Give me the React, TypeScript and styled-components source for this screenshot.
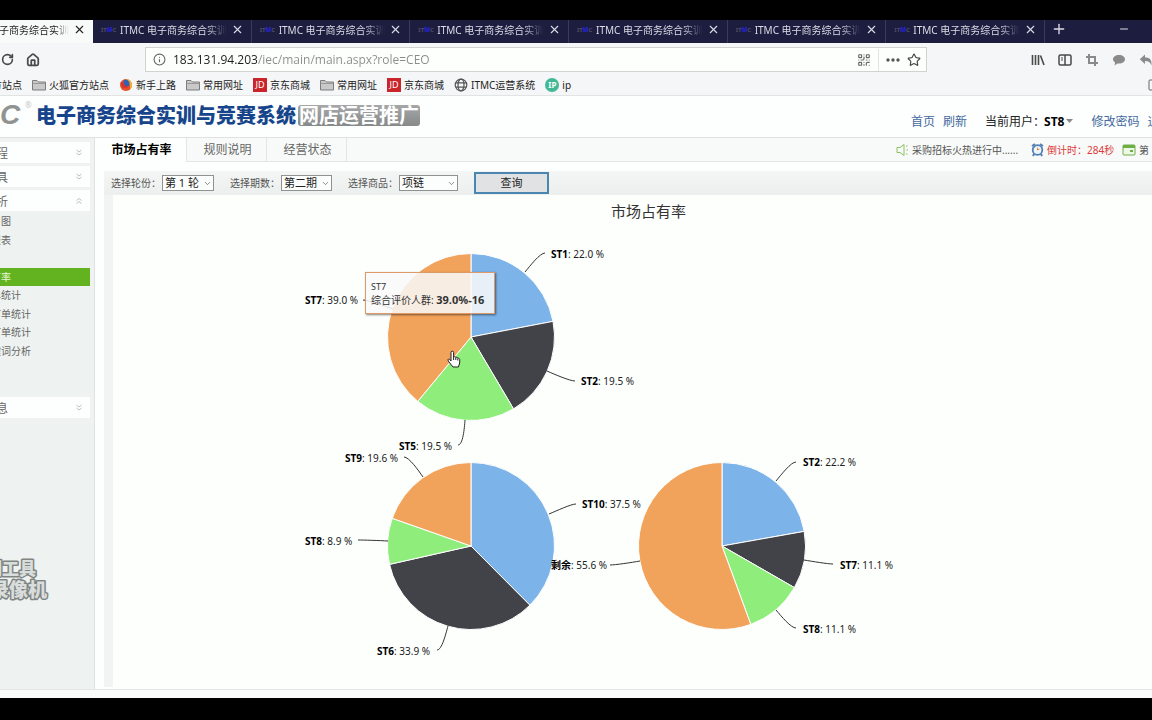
import React from 'react';
import styled, { createGlobalStyle, css } from 'styled-components';
import { X, Plus, Minus, House, RotateCw, Info, QrCode, Star, ChevronDown } from 'lucide-react';

const GlobalStyle = createGlobalStyle`
  *, *::before, *::after { box-sizing: border-box; }
  body {
    margin: 0;
    background: #000;
    font-family: "Noto Sans", "Noto Sans CJK SC", sans-serif;
    font-size: 10px;
    color: #333;
  }
  button, input, select { font: inherit; color: inherit; margin: 0; }
  button { padding: 0; border: 0; background: none; }
  svg { display: block; flex: none; }
  a { text-decoration: none; color: inherit; }
`;

const Screen = styled.div`
  position: relative;
  display: flex;
  flex-direction: column;
  min-height: 100vh;
  padding: 20px 0 22px;
  background: #000;
  overflow: hidden;
`;

/* ---------- browser chrome ---------- */

const TabStrip = styled.div`
  display: flex;
  height: 23px;
  background: #1d1d40;
  color: #dcdce6;
`;

const TabGroup = styled.div`
  flex: 0 1 952px;
  display: grid;
  grid-template-columns: repeat(6, 1fr);
`;

const BrowserTab = styled.div<{ $active?: boolean }>`
  display: flex;
  align-items: center;
  gap: 4px;
  height: 23px;
  padding: 0 7px 4px 8px;
  border-right: 1px solid #3a3a5a;
  overflow: hidden;
  white-space: nowrap;
  ${p =>
    p.$active &&
    css`
      flex: 0 0 93px;
      padding-left: 0;
      background: #f8f9f9;
      color: #222;
      border: 0;
    `}
`;

const TabTitle = styled.span<{ $end?: boolean }>`
  flex: 1;
  min-width: 0;
  display: flex;
  justify-content: ${p => (p.$end ? 'flex-end' : 'flex-start')};
  overflow: hidden;
  line-height: 18px;
  mask-image: linear-gradient(to right, #000 80%, transparent 100%);
`;

const Favicon = styled.span`
  width: 15px;
  font-size: 6px;
  font-weight: 700;
  line-height: 18px;
  color: #4d4d63;
  b { color: #2323c8; }
`;

const StripButton = styled.button`
  display: flex;
  align-items: center;
  justify-content: center;
  height: 18px;
`;

const NewTab = styled(StripButton)`
  width: 28px;
`;

const Minimize = styled(StripButton)`
  width: 20px;
  margin-left: auto;
  margin-right: 18px;
`;

const NavBar = styled.div`
  display: flex;
  align-items: center;
  height: 33px;
  background: #f5f6f7;
  color: #4a4a4a;
`;

const NavLeft = styled.div`
  flex: 0 0 145px;
  display: flex;
  align-items: center;
  gap: 12px;
`;

const IconButton = styled.button`
  display: flex;
  align-items: center;
  justify-content: center;
  width: 14px;
  height: 16px;
`;

const AddressBar = styled.div`
  flex: 1;
  display: flex;
  align-items: center;
  height: 25px;
  padding: 0 5px 0 7px;
  gap: 7px;
  border: 1px solid #d2d2d2;
  background: #fdfffd;
  color: #666;
`;

const AddressInput = styled.input`
  flex: 1;
  min-width: 0;
  height: 22px;
  padding: 0;
  border: 0;
  outline: 0;
  font-family: "Open Sans", sans-serif;
  font-size: 12px;
  background: linear-gradient(to right, #1c1c1c 84px, #8b8b8b 84px);
  background-clip: text;
  -webkit-background-clip: text;
  -webkit-text-fill-color: transparent;
`;

const AddressDivider = styled.i`
  width: 1px;
  height: 22px;
  background: #e2e2e2;
`;

const NavRight = styled.div`
  flex: 0 0 225px;
  display: flex;
  align-items: center;
  gap: 13px;
  padding-left: 104px;
  overflow: hidden;
`;

const BookmarkBar = styled.div`
  display: flex;
  align-items: center;
  gap: 10px;
  height: 20px;
  padding-bottom: 2px;
  background: #f5f6f7;
  border-bottom: 1px solid #e2e3e3;
  color: #222;
`;

const Bookmark = styled.a`
  display: flex;
  align-items: center;
  gap: 3px;
  white-space: nowrap;
  line-height: 16px;
`;

const ClippedBookmark = styled(Bookmark)`
  width: 22px;
  justify-content: flex-end;
  overflow: hidden;
`;

const PhoneLink = styled(IconButton)`
  width: 4px;
  margin-left: auto;
  overflow: hidden;
  justify-content: flex-start;
`;

/* ---------- page header ---------- */

const Header = styled.header`
  display: flex;
  align-items: flex-start;
  height: 42px;
  background: #fcfffd;
  border-bottom: 1px solid #dfe2e0;
`;

const Brand = styled.div`
  display: flex;
  align-items: center;
  height: 38px;
`;

const BrandMark = styled.span`
  width: 23px;
  font: italic 700 28px/38px "Liberation Sans", sans-serif;
  color: #909392;
`;

const Registered = styled.sup`
  width: 13px;
  align-self: flex-start;
  padding-left: 2px;
  font-size: 8px;
  line-height: 18px;
  color: #c6c8c7;
`;

const BrandTitle = styled.h1`
  margin: 0;
  font-family: "Noto Sans CJK SC", sans-serif;
  font-size: 20px;
  font-weight: 900;
  line-height: 38px;
  color: #17458c;
  white-space: nowrap;
`;

const BrandBadge = styled.span`
  height: 21px;
  margin-left: 2px;
  padding: 0 1px;
  border-radius: 3px;
  background: linear-gradient(#a6a8a8, #85898a);
  font-family: "Noto Sans CJK SC", sans-serif;
  font-size: 20px;
  font-weight: 700;
  line-height: 20px;
  color: #fff;
  white-space: nowrap;
`;

const UserNav = styled.nav`
  display: flex;
  align-items: center;
  width: 241px;
  height: 50px;
  margin-left: auto;
  overflow: hidden;
  white-space: nowrap;
  font-size: 12px;
  color: #222;
  a { color: #45699f; margin-right: 8px; }
`;

const UserMenu = styled.button`
  display: flex;
  align-items: center;
  gap: 2px;
  margin-right: 18px;
  font-weight: 700;
  color: #000;
`;

const UserLabel = styled.span`
  width: 59px;
  margin-left: 10px;
`;

/* ---------- body ---------- */

const Body = styled.div`
  flex: 1;
  display: flex;
  background: #fcfffd;
  border-bottom: 1px solid #e2e5e3;
`;

const Sidebar = styled.aside`
  flex: 0 0 95px;
  padding: 4px 4px 0 0;
  background: #eef2f0;
  border-right: 1px solid #dfe3e1;
`;

const GroupHeading = styled.button`
  display: flex;
  align-items: center;
  justify-content: space-between;
  width: 100%;
  height: 21px;
  margin-bottom: 3px;
  padding-right: 7px;
  background: #fdfffe;
  font-size: 12px;
  color: #666;
`;

const Clip = styled.span<{ $end: number }>`
  display: flex;
  justify-content: flex-end;
  width: ${p => p.$end}px;
  overflow: hidden;
  white-space: nowrap;
`;

const MenuList = styled.ul`
  display: grid;
  grid-auto-rows: 1fr;
  height: 185px;
  margin: -2px 0 0;
  padding: 0;
  list-style: none;
  color: #666;
`;

const MenuItem = styled.a<{ $selected?: boolean }>`
  display: flex;
  align-items: center;
  height: 100%;
  line-height: 18px;
  ${p => p.$selected && css`background: #62b31f; color: #e3f6d2;`}
`;

const Main = styled.main`
  flex: 1;
  min-width: 0;
  display: flex;
  flex-direction: column;
`;

const PageTabs = styled.div`
  display: flex;
  height: 24px;
  background: #f7faf8;
  border-bottom: 1px solid #e3e6e4;
`;

const PageTab = styled.button<{ $active?: boolean }>`
  width: ${p => (p.$active ? 92 : 80)}px;
  height: 24px;
  padding-left: 2px;
  border-right: 1px solid #e3e6e4;
  font-size: 12px;
  line-height: 22px;
  white-space: nowrap;
  color: #666;
  ${p => p.$active && css`background: #fcfffd; font-weight: 700; color: #000;`}
`;

const Status = styled.div`
  display: flex;
  align-items: center;
  width: 256px;
  margin-left: auto;
  gap: 3px;
  overflow: hidden;
  white-space: nowrap;
  color: #555;
`;

const Notice = styled.span`
  width: 116px;
`;

const Countdown = styled.span`
  width: 72px;
  color: #dd3a38;
`;

const Panel = styled.section`
  flex: 1;
  display: flex;
  flex-direction: column;
  margin: 9px 0 2px 9px;
  padding-left: 9px;
  background: #f2f4f3;
`;

const FilterBar = styled.form`
  display: flex;
  align-items: center;
  height: 24px;
  margin-left: -9px;
  padding-left: 7px;
  background: linear-gradient(#f4f6f5, #ebefed);
  color: #555;
`;

const FilterLabel = styled.label`
  width: 51px;
  line-height: 20px;
  white-space: nowrap;
`;

const SelectBox = styled.span<{ $w: number }>`
  position: relative;
  width: ${p => p.$w}px;
  margin-right: 16px;
  svg { position: absolute; right: 2px; top: 4px; pointer-events: none; }
`;

const Select = styled.select`
  display: block;
  appearance: none;
  width: 100%;
  height: 16px;
  padding: 0 0 0 2px;
  border: 1px solid #8f9291;
  border-radius: 0;
  background: #fcfefd;
  font-size: 11px;
  line-height: 14px;
  color: #222;
`;

const QueryButton = styled.button`
  width: 75px;
  height: 22px;
  border: 2px solid #4a86b0;
  background: #e0e2e3;
  font-size: 11px;
  line-height: 16px;
  color: #222;
`;

const ChartArea = styled.div`
  position: relative;
  flex: 1;
  overflow: hidden;
  background: #fdfffd;
`;

const ChartTitle = styled.h2`
  width: 1071px;
  margin: 0;
  padding-top: 5px;
  text-align: center;
  font-size: 15px;
  font-weight: 400;
  line-height: 22px;
  color: #333;
`;

const ChartSvg = styled.svg`
  margin-top: -27px;
  overflow: visible;
  font-size: 10px;
  fill: #222;
`;

const Tooltip = styled.div`
  position: absolute;
  left: 252px;
  top: 77px;
  width: 130px;
  height: 42px;
  padding: 7px 5px;
  border: 1px solid #dd9a68;
  background: rgba(249, 249, 249, 0.86);
  box-shadow: 1px 1px 2px rgba(0, 0, 0, 0.5);
  line-height: 13px;
  white-space: nowrap;
  color: #333;
  small { display: block; font-size: 9px; }
  b { font-size: 11px; }
`;

const Pointer = styled.svg`
  position: absolute;
  left: 334px;
  top: 155px;
`;

const FooterStrip = styled.footer`
  height: 8px;
  background: #fafcfb;
`;

const Watermark = styled.svg`
  position: absolute;
  left: 0;
  top: 556px;
  font-family: "Noto Sans CJK SC", sans-serif;
  font-weight: 900;
  fill: #d9dddb;
  stroke: #808583;
  stroke-width: 3px;
  stroke-linejoin: round;
  paint-order: stroke;
`;

/* ---------- icons ---------- */

const FolderIcon = () => (
  <svg width="14" height="14" viewBox="0 0 14 14" fill="#c9c9c9" stroke="#7c7c7c">
    <path d="M.5 2.5h4.5l1.500 1.500h7v8H.5z" />
    <path d="M.5 5.500h13" stroke="#999" />
  </svg>
);

const FirefoxIcon = () => (
  <svg width="14" height="14" viewBox="0 0 14 14">
    <circle cx="7" cy="7" r="6" fill="#e8502a" />
    <path d="M7 1a6 6 0 0 1 6 6c0 2-1 3.500-2 4.500C12 8 10 4 7 1z" fill="#f7b52c" />
    <path d="M5 2c3-1 6 1 5.500 4.500C10 9 7 9.500 5.500 8 4 6.500 4 4 5 2z" fill="#2f62b5" />
    <path d="M1.500 4C3 4 5 5 5.500 6.500S8 9 9.500 8.500C8 11 4 10.500 2.500 8.500z" fill="#d8332c" />
  </svg>
);

const Jd = styled.span`
  width: 14px;
  height: 14px;
  background: #c9252b;
  color: #fff;
  font-size: 9px;
  line-height: 14px;
  text-align: center;
`;

const IpMark = styled(Jd)`
  border-radius: 7px;
  background: #43b896;
  font-size: 8px;
  font-weight: 700;
`;

const GlobeIcon = () => (
  <svg width="14" height="14" viewBox="0 0 14 14" fill="none" stroke="#555" strokeWidth="1.2">
    <circle cx="7" cy="7" r="5.8" />
    <ellipse cx="7" cy="7" rx="3" ry="5.800" />
    <path d="M1.800 4.800h10.400M1.800 9.200h10.400" />
  </svg>
);

const LibraryIcon = () => (
  <svg width="14" height="14" viewBox="0 0 14 14" fill="none" stroke="#4a4a4a" strokeWidth="1.600">
    <path d="M1.500 2v10M4.500 2v10M7.500 2v10M9.500 2.500l3.500 9.500" />
  </svg>
);

const SidebarIcon = () => (
  <svg width="14" height="14" viewBox="0 0 14 14" fill="none" stroke="#4a4a4a" strokeWidth="1.500">
    <rect x="1" y="2" width="12" height="10" rx="1.500" />
    <path d="M7 2v10" />
    <path d="M3 5h2M3 7h2" strokeWidth="1" />
  </svg>
);

const CropIcon = () => (
  <svg width="14" height="14" viewBox="0 0 14 14" fill="none" stroke="#8a8a8a" strokeWidth="2">
    <path d="M4 1v9h9M1 4h9v9" />
  </svg>
);

const ChatIcon = () => (
  <svg width="14" height="14" viewBox="0 0 14 14" fill="#8a8a8a">
    <path d="M7 2c3.500 0 6 1.900 6 4.300s-2.500 4.300-6 4.300c-.6 0-1 0-1.500-.1L2.500 12.500l.6-3C1.800 8.700 1 7.500 1 6.300 1 3.900 3.500 2 7 2z" />
  </svg>
);

const UndoIcon = () => (
  <svg width="14" height="14" viewBox="0 0 14 14" fill="#8a8a8a">
    <path d="M6 1.500v3c5 0 7 2.500 6.500 8-1-3.200-3-4.500-6.500-4.500v3L.8 6.200z" />
  </svg>
);

const DoubleChevron = ({ up }: { up?: boolean }) => (
  <svg width="8" height="8" viewBox="0 0 8 8" fill="none" stroke="#bcc0be">
    <path d={up ? 'M1.500 3.500l2.500-2L6.500 3.500M1.500 6.500l2.500-2L6.500 6.500' : 'M1.500 1l2.500 2L6.500 1M1.500 4l2.500 2L6.500 4'} />
  </svg>
);

const SpeakerIcon = () => (
  <svg width="13" height="14" viewBox="0 0 13 14" fill="none" stroke="#8cc063">
    <path d="M1 4.500h3L8 1.500v11L4 9.500H1z" />
    <path d="M10 3.500l1.500-1M10.500 7H12M10 10.500l1.500 1" />
  </svg>
);

const AlarmIcon = () => (
  <svg width="13" height="14" viewBox="0 0 13 14">
    <path d="M1 3l3-2M12 3L9 1M3 11l-1 2M10 11l1 2" stroke="#5c7ea8" strokeWidth="2" />
    <circle cx="6.500" cy="7" r="4.800" fill="#eef4fa" stroke="#4f7fb8" strokeWidth="1.800" />
    <path d="M6.500 4.500V7l2-1" fill="none" stroke="#e08a2c" />
  </svg>
);

const CalendarIcon = () => (
  <svg width="14" height="14" viewBox="0 0 14 14">
    <rect x="1" y="2" width="12" height="10" rx="1" fill="#eef8e6" stroke="#6fae45" />
    <path d="M1 2h12v3H1z" fill="#6fae45" />
    <path d="M8 8h3" stroke="#6fae45" strokeWidth="2" />
  </svg>
);

/* ---------- chart data ---------- */

type Point = [number, number];
interface Slice {
  name: string;
  value: number;
  color: string;
  text: Point;
  from: Point;
  to: Point;
}
interface PieData {
  cx: number;
  cy: number;
  slices: Slice[];
}

const BLUE = '#7cb3e9';
const DARK = '#424348';
const GREEN = '#8fee7b';
const ORANGE = '#f2a35b';
const RADIUS = 83.5;

const pies: PieData[] = [
  {
    cx: 358,
    cy: 142,
    slices: [
      { name: 'ST1', value: 22.0, color: BLUE, text: [438, 63], from: [432, 58], to: [412, 77] },
      { name: 'ST2', value: 19.5, color: DARK, text: [468, 190], from: [462, 186], to: [434, 176] },
      { name: 'ST5', value: 19.5, color: GREEN, text: [286, 255], from: [345, 250], to: [352, 225] },
      { name: 'ST7', value: 39.0, color: ORANGE, text: [192, 109], from: [250, 105], to: [280, 114] },
    ],
  },
  {
    cx: 358,
    cy: 351,
    slices: [
      { name: 'ST10', value: 37.5, color: BLUE, text: [469, 313], from: [463, 309], to: [436, 319] },
      { name: 'ST6', value: 33.9, color: DARK, text: [264, 460], from: [324, 455], to: [335, 431] },
      { name: 'ST8', value: 8.9, color: GREEN, text: [192, 350], from: [245, 345], to: [275, 346] },
      { name: 'ST9', value: 19.6, color: ORANGE, text: [232, 267], from: [291, 262], to: [310, 282] },
    ],
  },
  {
    cx: 609,
    cy: 351,
    slices: [
      { name: 'ST2', value: 22.2, color: BLUE, text: [690, 271], from: [683, 267], to: [663, 286] },
      { name: 'ST7', value: 11.1, color: DARK, text: [727, 374], from: [720, 369], to: [691, 365] },
      { name: 'ST8', value: 11.1, color: GREEN, text: [690, 438], from: [683, 433], to: [663, 415] },
      { name: '剩余', value: 55.6, color: ORANGE, text: [438, 374], from: [497, 370], to: [527, 366] },
    ],
  },
];

const Pie = ({ cx, cy, slices }: PieData) => {
  const total = slices.reduce((sum, s) => sum + s.value, 0);
  let start = 0;
  const at = (v: number) => {
    const a = (v / total) * Math.PI * 2;
    return `${cx + RADIUS * Math.sin(a)} ${cy - RADIUS * Math.cos(a)}`;
  };
  return (
    <g>
      {slices.map(s => {
        const d = `M${cx} ${cy}L${at(start)}A${RADIUS} ${RADIUS} 0 ${s.value / total > 0.5 ? 1 : 0} 1 ${at(start + s.value)}Z`;
        start += s.value;
        return <path key={s.name} d={d} fill={s.color} stroke="#fff" strokeLinejoin="round" />;
      })}
      {slices.map(s => {
        const [x, y] = s.from;
        const [ex, ey] = s.to;
        const bend = x > cx ? -5 : 5;
        const c2x = ex + (ex - cx) * 0.1;
        const c2y = ey + (ey - cy) * 0.1;
        return (
          <g key={s.name}>
            <path d={`M${x} ${y}C${x + bend} ${y} ${c2x} ${c2y} ${ex} ${ey}`} fill="none" stroke="#333" />
            <text x={s.text[0]} y={s.text[1]}>
              <tspan fontWeight="700" fill="#000">{s.name}</tspan>: {s.value.toFixed(1)} %
            </text>
          </g>
        );
      })}
    </g>
  );
};

/* ---------- page ---------- */

const PAGE_TITLE = '电子商务综合实训';

const filters = [
  { id: 'round', label: '选择轮份：', value: '第 1 轮', width: 52 },
  { id: 'period', label: '选择期数：', value: '第二期', width: 51 },
  { id: 'goods', label: '选择商品：', value: '项链', width: 59 },
];

const menu: { text: string; end: number; selected?: boolean }[] = [
  { text: '图', end: 11 },
  { text: '报表', end: 11 },
  { text: '', end: 11 },
  { text: '占有率', end: 11, selected: true },
  { text: '单统计', end: 21 },
  { text: '订单统计', end: 31 },
  { text: '订单统计', end: 31 },
  { text: '键词分析', end: 31 },
  { text: '', end: 11 },
  { text: '', end: 11 },
];

export default function App() {
  return (
    <>
      <GlobalStyle />
      <Screen>
        <TabStrip>
          <BrowserTab $active>
            <TabTitle $end>{PAGE_TITLE}</TabTitle>
            <StripButton aria-label="关闭"><X size={13} /></StripButton>
          </BrowserTab>
          <TabGroup>
            {[1, 2, 3, 4, 5, 6].map(n => (
              <BrowserTab key={n}>
                <Favicon>IT<b>M</b>C</Favicon>
                <TabTitle>ITMC {PAGE_TITLE}</TabTitle>
                <StripButton aria-label="关闭"><X size={13} /></StripButton>
              </BrowserTab>
            ))}
          </TabGroup>
          <NewTab aria-label="新标签页"><Plus size={16} /></NewTab>
          <Minimize aria-label="最小化"><Minus size={12} /></Minimize>
        </TabStrip>

        <NavBar>
          <NavLeft>
            <IconButton aria-label="刷新"><RotateCw size={13} strokeWidth={3} /></IconButton>
            <IconButton aria-label="主页"><House size={14} strokeWidth={3} /></IconButton>
          </NavLeft>
          <AddressBar>
            <Info size={13} />
            <AddressInput aria-label="地址" defaultValue="183.131.94.203/iec/main/main.aspx?role=CEO" />
            <IconButton aria-label="二维码"><QrCode size={14} /></IconButton>
            <AddressDivider />
            <IconButton aria-label="更多">
              <svg width="14" height="4" viewBox="0 0 14 4" fill="#555">
                <circle cx="2" cy="2" r="1.700" /><circle cx="7" cy="2" r="1.700" /><circle cx="12" cy="2" r="1.700" />
              </svg>
            </IconButton>
            <IconButton aria-label="收藏"><Star size={14} strokeWidth={2} color="#444" /></IconButton>
          </AddressBar>
          <NavRight>
            <IconButton aria-label="书库"><LibraryIcon /></IconButton>
            <IconButton aria-label="侧栏"><SidebarIcon /></IconButton>
            <IconButton aria-label="截图"><CropIcon /></IconButton>
            <IconButton aria-label="消息"><ChatIcon /></IconButton>
            <IconButton aria-label="撤销"><UndoIcon /></IconButton>
          </NavRight>
        </NavBar>

        <BookmarkBar>
          <ClippedBookmark href="#">官方站点</ClippedBookmark>
          <Bookmark href="#"><FolderIcon />火狐官方站点</Bookmark>
          <Bookmark href="#"><FirefoxIcon />新手上路</Bookmark>
          <Bookmark href="#"><FolderIcon />常用网址</Bookmark>
          <Bookmark href="#"><Jd>JD</Jd>京东商城</Bookmark>
          <Bookmark href="#"><FolderIcon />常用网址</Bookmark>
          <Bookmark href="#"><Jd>JD</Jd>京东商城</Bookmark>
          <Bookmark href="#"><GlobeIcon />ITMC运营系统</Bookmark>
          <Bookmark href="#"><IpMark>IP</IpMark>ip</Bookmark>
          <PhoneLink aria-label="移动版书签">
            <svg width="10" height="12" viewBox="0 0 10 12" fill="none" stroke="#666">
              <rect x="1" y="1" width="8" height="10" rx="1" />
            </svg>
          </PhoneLink>
        </BookmarkBar>

        <Header>
          <Brand>
            <BrandMark>C</BrandMark>
            <Registered>®</Registered>
            <BrandTitle>电子商务综合实训与竞赛系统</BrandTitle>
            <BrandBadge>网店运营推广</BrandBadge>
          </Brand>
          <UserNav>
            <a href="#">首页</a>
            <a href="#">刷新</a>
            <UserLabel>当前用户：</UserLabel>
            <UserMenu>
              ST8
              <svg width="7" height="4" viewBox="0 0 7 4" fill="#888"><path d="M0 0h7L3.500 4z" /></svg>
            </UserMenu>
            <a href="#">修改密码</a>
            <a href="#">退出</a>
          </UserNav>
        </Header>

        <Body>
          <Sidebar>
            <GroupHeading><Clip $end={8}>流程</Clip><DoubleChevron /></GroupHeading>
            <GroupHeading><Clip $end={8}>工具</Clip><DoubleChevron /></GroupHeading>
            <GroupHeading><Clip $end={8}>分析</Clip><DoubleChevron up /></GroupHeading>
            <MenuList>
              {menu.map((m, i) => (
                <li key={i}>
                  <MenuItem href="#" $selected={m.selected}>
                    <Clip $end={m.end}>{m.text}</Clip>
                  </MenuItem>
                </li>
              ))}
            </MenuList>
            <GroupHeading><Clip $end={8}>信息</Clip><DoubleChevron /></GroupHeading>
          </Sidebar>

          <Main>
            <PageTabs>
              <PageTab $active>市场占有率</PageTab>
              <PageTab>规则说明</PageTab>
              <PageTab>经营状态</PageTab>
              <Status>
                <SpeakerIcon />
                <Notice>采购招标火热进行中......</Notice>
                <AlarmIcon />
                <Countdown>倒计时：284秒</Countdown>
                <CalendarIcon />
                <span>第</span>
              </Status>
            </PageTabs>

            <Panel>
              <FilterBar onSubmit={e => e.preventDefault()}>
                {filters.map(f => (
                  <React.Fragment key={f.id}>
                    <FilterLabel htmlFor={f.id}>{f.label}</FilterLabel>
                    <SelectBox $w={f.width}>
                      <Select id={f.id}><option>{f.value}</option></Select>
                      <ChevronDown size={9} color="#666" />
                    </SelectBox>
                  </React.Fragment>
                ))}
                <QueryButton type="submit">查询</QueryButton>
              </FilterBar>

              <ChartArea>
                <ChartTitle>市场占有率</ChartTitle>
                <ChartSvg width="1039" height="480" viewBox="0 0 1039 480">
                  {pies.map((p, i) => <Pie key={i} {...p} />)}
                </ChartSvg>
                <Tooltip>
                  <small>ST7</small>
                  综合评价人群: <b>39.0%-16</b>
                </Tooltip>
                <Pointer width="14" height="18" viewBox="0 0 14 18">
                  <path
                    d="M4 11V2.500a1.300 1.300 0 0 1 2.600 0V7c.8-.6 2-.4 2.200.4.900-.4 1.900 0 2 .8 1-.3 1.900.3 1.900 1.300V13l-1.300 4H6L2 12c-1.300-1.700-1.200-2.600-.6-2.900.8-.4 1.600.4 2.600 1.900z"
                    fill="#fff"
                    stroke="#222"
                  />
                  <path d="M6.600 7v3M8.800 7.500v2.500M10.800 8.500V10.500" stroke="#222" />
                </Pointer>
              </ChartArea>
            </Panel>
          </Main>
        </Body>
        <FooterStrip />

        <Watermark width="52" height="50" viewBox="0 0 52 50">
          <text x="36" y="19" fontSize="17" textAnchor="end">录制工具</text>
          <text x="47" y="41" fontSize="19" textAnchor="end">录像机</text>
        </Watermark>
      </Screen>
    </>
  );
}
